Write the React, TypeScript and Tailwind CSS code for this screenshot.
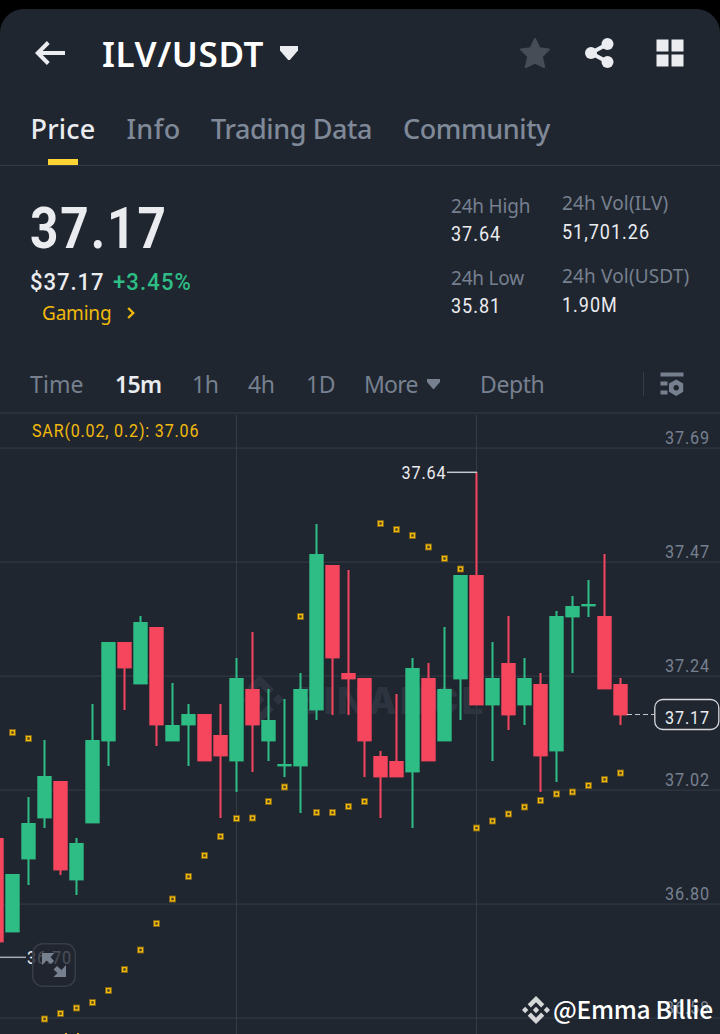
import React, { useState } from 'react'

// [high, body top, body bottom, low, up?] in page pixels
type Candle = [number, number, number, number, boolean]

const FIRST_X = -3.5
const STEP = 16

const candles: Candle[] = [
  [838, 838, 942, 942, false],
  [874, 874, 932, 932, true],
  [797, 823, 859, 885, true],
  [740, 776, 818, 828, true],
  [781, 781, 870, 875, false],
  [838, 843, 880, 895, true],
  [704, 740, 823, 823, true],
  [642, 642, 741, 766, true],
  [642, 642, 668, 710, false],
  [616, 622, 684, 684, true],
  [627, 627, 725, 746, false],
  [683, 725, 741, 741, true],
  [704, 714, 725, 766, true],
  [714, 714, 761, 761, false],
  [704, 735, 756, 818, false],
  [658, 678, 761, 792, true],
  [632, 689, 725, 772, false],
  [689, 720, 741, 761, true],
  [699, 764, 766, 777, true],
  [673, 689, 766, 813, true],
  [524, 554, 710, 720, true],
  [565, 565, 658, 715, false],
  [570, 673, 679, 715, false],
  [678, 678, 741, 777, false],
  [751, 756, 777, 818, false],
  [694, 761, 777, 777, false],
  [658, 668, 772, 828, true],
  [663, 678, 761, 761, false],
  [627, 689, 741, 741, true],
  [575, 575, 679, 720, true],
  [472, 575, 705, 705, false],
  [642, 678, 705, 761, true],
  [616, 663, 715, 730, false],
  [658, 678, 705, 725, true],
  [673, 684, 756, 792, false],
  [611, 616, 751, 782, true],
  [596, 606, 617, 673, true],
  [580, 604, 606, 617, true],
  [554, 616, 689, 689, false],
  [678, 684, 715, 725, false],
]

// one SAR marker per candle, starting at the second one
const sar = [
  732.5, 738.5, 1019, 1013.5, 1008, 1002.5, 990.5, 969.5, 950, 923.5, 899, 876.5, 855.5,
  836.5, 818.5, 818, 801.5, 787, 616.5, 812.5, 812.5, 806.5, 801.5, 523.5, 529.5, 535.5,
  547, 558.5, 569, 828, 821, 814, 807, 800.5, 794, 792, 785.5, 779.5, 773,
]

const gridLines = [
  { y: 448, label: '37.69' },
  { y: 562, label: '37.47' },
  { y: 676, label: '37.24' },
  { y: 790, label: '37.02' },
  { y: 904, label: '36.80' },
  { y: 1018, label: '36.58' },
]

const tabs = [
  { name: 'Price', box: 'w-16 mr-8 tracking-[0.2px]' },
  { name: 'Info', box: 'w-[53px] mr-[31px] tracking-[0.4px]' },
  { name: 'Trading Data', box: 'w-[161px] mr-[31px] tracking-[-0.4px]' },
  { name: 'Community', box: 'w-[147px] tracking-[-0.4px]' },
]

const intervals = [
  { name: 'Time', box: 'w-[85px] tracking-[0.1px]' },
  { name: '15m', box: 'w-[77px] tracking-[-0.6px]' },
  { name: '1h', box: 'w-14 tracking-[-0.5px]' },
  { name: '4h', box: 'w-[58px] tracking-[-0.3px]' },
  { name: '1D', box: 'w-[58px] tracking-[-0.5px]' },
  { name: 'More', box: 'w-[63px] tracking-[-0.8px]' },
]

function BinanceMark({ x, y, size, fill }: { x: number; y: number; size: number; fill: string }) {
  return (
    <svg x={x} y={y} width={size} height={size} viewBox="0 0 24 24" fill={fill}>
      <path d="M12 0 19.1 7.1 16.4 9.8 12 5.4 7.6 9.8 4.9 7.1ZM0 12l2.7-2.7L5.4 12l-2.7 2.7ZM18.6 12l2.7-2.7L24 12l-2.7 2.7ZM12 24l-7.1-7.1 2.7-2.7 4.4 4.4 4.4-4.4 2.7 2.7ZM9.3 12 12 9.3l2.7 2.7-2.7 2.7Z" />
    </svg>
  )
}

function Header() {
  return (
    <header className="flex h-[88px] items-center pl-[35px] pr-9">
      <button aria-label="Back">
        <svg width="30" height="24" viewBox="0 0 30 24" fill="none" stroke="#eaecef" strokeWidth="4">
          <path d="M30 12H3M13.3 1.5 2.8 12l10.5 10.5" />
        </svg>
      </button>
      <h1 className="ml-[37px] w-[164px] whitespace-nowrap pt-0.5 text-[35px] font-semibold leading-[48px] tracking-[0.6px] text-white">
        ILV/USDT
      </h1>
      <svg className="ml-[14px]" width="18" height="14" viewBox="0 0 18 14" fill="#eaecef">
        <path d="M0 0h18v4.5L9.8 14H8.2L0 4.5Z" />
      </svg>
      <div className="ml-auto flex items-center">
        <svg width="30" height="30" viewBox="0 0 30 30" fill="#474d57" stroke="#474d57" strokeWidth="2" strokeLinejoin="round">
          <path d="m15 1 4.3 9.2 9.7 1.2-7.2 7.2 2.4 10.4-9.2-4.3L5.8 29l2.4-10.4L1 11.4l9.7-1.2Z" />
        </svg>
        <svg className="ml-[35px]" width="29" height="30" viewBox="0 0 29 30" fill="#eaecef">
          <path d="M6 15 22.5 6M6 15l16.5 9" stroke="#eaecef" strokeWidth="4" />
          <circle cx="6" cy="15" r="6" />
          <circle cx="22.5" cy="6" r="6" />
          <circle cx="22.5" cy="24" r="6" />
        </svg>
        <svg className="ml-[42px]" width="28" height="28" viewBox="0 0 28 28" fill="#eaecef">
          <path d="M.5.5h12v12H.5zM15.5.5h12v12h-12zM.5 15.5h12v12H.5zM15.5 15.5h12v12h-12z" />
        </svg>
      </div>
    </header>
  )
}

function Stat({ label, value, wide }: { label: string; value: string; wide?: boolean }) {
  return (
    <div className={`whitespace-nowrap ${wide ? 'h-[73px]' : 'h-[72px]'}`}>
      <div className={`text-[19px] leading-7 text-[#76808f] ${wide ? 'tracking-[0.15px]' : 'tracking-[-0.2px]'}`}>{label}</div>
      <div className={`origin-left scale-x-90 font-['Roboto',sans-serif] text-[20px] leading-7 tracking-[1.1px] text-[#eaecef] ${wide ? 'pt-px' : ''}`}>
        {value}
      </div>
    </div>
  )
}

function Chart() {
  return (
    <svg className="block" width="720" height="620" viewBox="0 414 720 620" fontFamily="Roboto, sans-serif">
      {/* Grid */}
      {gridLines.map((g) => (
        <rect key={g.y} x="0" y={g.y - 0.5} width="720" height="1.4" fill="#2f3641" />
      ))}
      <rect x="236" y="415" width="1" height="619" fill="#353c48" />
      <rect x="476" y="415" width="1" height="619" fill="#353c48" />

      {/* Watermark */}
      <BinanceMark x={235} y={675} size={49} fill="#2d343f" />
      <text x="296" y="714" fontFamily="Inter, sans-serif" fontSize="37" fontWeight="800" textLength="188" fill="#2d343f">BINANCE</text>

      {/* Candles */}
      {candles.map(([high, top, bottom, low, up], i) => {
        const x = FIRST_X + i * STEP
        const fill = up ? '#2ebd85' : '#f6465d'
        return (
          <g key={i} fill={fill}>
            <rect x={x - 1} y={high} width="2" height={low - high} />
            <rect x={x - 7.2} y={top} width="14.4" height={bottom - top + 0.4} />
          </g>
        )
      })}

      {/* SAR */}
      {sar.map((y, i) => {
        const x = FIRST_X + (i + 1) * STEP
        return (
          <g key={i}>
            <rect x={x - 3.4} y={y - 3.4} width="6.8" height="6.8" fill="#8b6d18" />
            <rect x={x - 2.5} y={y - 2.5} width="5" height="5" fill="#f0b90b" />
            <rect x={x - 1.2} y={y - 1.2} width="2.4" height="2.4" fill="#4d421f" />
          </g>
        )
      })}
      <g transform="translate(32 437) scale(0.92 1)">
        <text fontSize="17.5" textLength="181" fill="#f0b90b">SAR(0.02, 0.2): 37.06</text>
      </g>

      {/* Price labels */}
      {gridLines.map((g) => (
        <g key={g.label} transform={`translate(665 ${g.y - 4}) scale(0.9 1)`}>
          <text fontSize="18" textLength="49" fill="#76808f">{g.label}</text>
        </g>
      ))}
      <g transform="translate(401.5 479) scale(0.9 1)">
        <text fontSize="18" textLength="49" fill="#eaecef">37.64</text>
      </g>
      <path d="M447 472.3h30" stroke="#c3c6cb" strokeWidth="1.5" />
      <path d="M627 714.5h28" stroke="#c3c6cb" strokeDasharray="5 3" />
      <rect x="654.8" y="699.5" width="64" height="30" rx="8" fill="#202630" stroke="#d5d7dc" strokeWidth="1.3" />
      <g transform="translate(665 724) scale(0.9 1)">
        <text fontSize="18" textLength="49" fill="#eaecef">37.17</text>
      </g>
      <path d="M0 957.3h26" stroke="#a5a9b0" strokeWidth="1.5" />
      <g transform="translate(27 964) scale(0.9 1)">
        <text fontSize="18" textLength="49" fill="#eaecef">36.70</text>
      </g>

      {/* Expand button */}
      <rect x="32.8" y="943.8" width="42.4" height="42.4" rx="10" fill="#202630" fillOpacity="0.8" stroke="#363d48" strokeWidth="1.6" />
      <g fill="#76808f">
        <path d="M42 953h12.5l-4 4 3.5 4-3 3-4.5-3.5L42 965ZM66 977H53.500l4-4-4-3.5 3.500-3.500 4.500 4 4.500-5Z" />
        <path d="M65 1033h2v1h-2zM77 1033h2v1h-2z" fill="#f0b90b" />
      </g>

      {/* Author tag */}
      <BinanceMark x={522} y={996} size={28} fill="#d5d6d8" />
      <text x="553" y="1019" fontFamily="'Noto Sans CJK SC', sans-serif" fontSize="24.5" fontWeight="500" textLength="160" fill="#fff">@Emma Billie</text>
    </svg>
  )
}

export default function App() {
  const [tab, setTab] = useState('Price')
  const [range, setRange] = useState('15m')

  return (
    <div className="h-[1034px] w-[720px] overflow-hidden bg-black pt-[9px] font-['Noto_Sans',sans-serif]">
      <div className="h-[1025px] rounded-t-[24px] bg-[#202630]">
        <Header />

        {/* Tabs */}
        <nav className="flex h-[69px] border-b border-[#353c47] pl-[31px] pt-3">
          {tabs.map((t) => (
            <button
              key={t.name}
              onClick={() => setTab(t.name)}
              className={`flex flex-col items-center whitespace-nowrap text-[27px] font-medium leading-10 ${t.box} ${
                tab === t.name ? 'text-[#eaecef]' : 'text-[#7f8998]'
              }`}
            >
              <span className="h-10">{t.name}</span>
              {tab === t.name && <span className="mt-2.5 h-1.5 w-[30px] bg-[#fcd535]" />}
            </button>
          ))}
        </nav>

        {/* Ticker */}
        <section className="flex h-[189px] pl-[30px]">
          <div className="w-[421px] whitespace-nowrap font-['Roboto',sans-serif]">
            <div className="mt-[30px] origin-left scale-x-[0.87] text-[57px] font-bold leading-[66px] tracking-[2.2px] text-[#eaecef]">
              37.17
            </div>
            <div className="mt-[5px] flex text-[24px] font-medium leading-[30px]">
              <span className="w-[83px] origin-left scale-x-[0.92] tracking-[1px] text-[#eaecef]">$37.17</span>
              <span className="origin-left scale-x-[0.92] tracking-[1.2px] text-[#2ebd85]">+3.45%</span>
            </div>
            <div className="flex items-center pl-3 font-['Noto_Sans',sans-serif] text-[19px] leading-8 text-[#f0b90b]">
              <span className="w-[85px] tracking-[-0.2px]">Gaming</span>
              <svg width="8" height="12" viewBox="0 0 8 12" fill="none" stroke="#f0b90b" strokeWidth="2.4">
                <path d="m1.2 1 5 5-5 5" />
              </svg>
            </div>
          </div>
          <div className="w-[111px] pt-[26px]">
            <Stat label="24h High" value="37.64" />
            <Stat label="24h Low" value="35.81" />
          </div>
          <div className="pt-[23px]">
            <Stat label="24h Vol(ILV)" value="51,701.26" wide />
            <Stat label="24h Vol(USDT)" value="1.90M" wide />
          </div>
        </section>

        {/* Intervals */}
        <div className="flex h-[59px] items-center border-b-2 border-[#2b313c] pl-[30px] text-[23px] text-[#76808f]">
          {intervals.map((r) => (
            <button
              key={r.name}
              onClick={() => setRange(r.name)}
              className={`pt-0.5 text-left ${r.box} ${range === r.name ? 'font-semibold text-[#eaecef]' : ''}`}
            >
              {r.name}
            </button>
          ))}
          <svg width="13" height="10" viewBox="0 0 13 10" fill="#76808f">
            <path d="M0 0h13v3L7 10H6L0 3Z" />
          </svg>
          <button className="ml-10 pt-0.5 tracking-[-0.4px]">Depth</button>
          <div className="ml-auto h-6 w-[1.5px] bg-[#353c47]" />
          <svg className="ml-4 mr-9" width="24" height="24" viewBox="0 0 24 24" fill="#76808f">
            <path d="M.5.5h23v4H.5zM.5 9.5h7v4h-7zM.5 18.5h7v4h-7z" />
            <path fillRule="evenodd" d="m16.2 7.5 7 4v8.3l-7 4.2-7.2-4.2v-8.3ZM16.2 13a2.8 2.8 0 1 0 .01 0Z" />
          </svg>
        </div>

        <Chart />
      </div>
    </div>
  )
}
